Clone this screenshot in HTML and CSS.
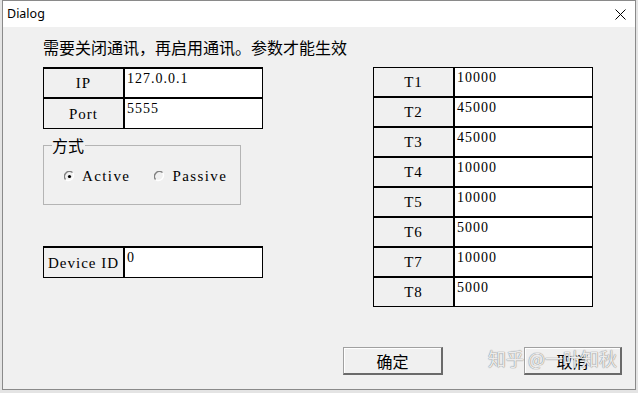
FILE: index.html
```html
<!DOCTYPE html>
<html lang="zh-CN">
<head>
<meta charset="utf-8">
<title>Dialog</title>
<link rel="stylesheet" href="styles.css">
</head>
<body>
<div class="window">
  <div class="titlebar">
    <span class="title">Dialog</span>
    <svg class="close" width="11" height="11" viewBox="0 0 11 11"><path d="M0.5 0.5 L10.5 10.5 M10.5 0.5 L0.5 10.5" stroke="#000" stroke-width="1" fill="none"/></svg>
  </div>
  <div class="client">
    <div class="heading">需要关闭通讯，再启用通讯。参数才能生效</div>
    <div class="columns">
      <div class="col-left">
        <div class="kv kv-two">
          <div class="k">IP</div><div class="v">127.0.0.1</div>
          <div class="k">Port</div><div class="v">5555</div>
        </div>
        <fieldset class="group">
          <legend>方式</legend>
          <div class="radios">
            <label class="radio">
              <svg width="11" height="11" viewBox="0 0 11 11"><path d="M1.5 8.5 A5 5 0 0 1 8.5 1.5" stroke="#808080" stroke-width="1.4" fill="none"/><path d="M8.8 2 A5 5 0 0 1 2 8.8" stroke="#ffffff" stroke-width="1.4" fill="none"/><circle cx="5.5" cy="5.5" r="1.6" fill="#000"/></svg>
              <span>Active</span>
            </label>
            <label class="radio">
              <svg width="11" height="11" viewBox="0 0 11 11"><path d="M1.5 8.5 A5 5 0 0 1 8.5 1.5" stroke="#808080" stroke-width="1.4" fill="none"/><path d="M8.8 2 A5 5 0 0 1 2 8.8" stroke="#ffffff" stroke-width="1.4" fill="none"/></svg>
              <span>Passive</span>
            </label>
          </div>
        </fieldset>
        <div class="kv kv-one">
          <div class="k">Device ID</div><div class="v">0</div>
        </div>
      </div>
      <div class="col-right">
        <div class="kv kv-eight">
          <div class="k">T1</div><div class="v">10000</div>
          <div class="k">T2</div><div class="v">45000</div>
          <div class="k">T3</div><div class="v">45000</div>
          <div class="k">T4</div><div class="v">10000</div>
          <div class="k">T5</div><div class="v">10000</div>
          <div class="k">T6</div><div class="v">5000</div>
          <div class="k">T7</div><div class="v">10000</div>
          <div class="k">T8</div><div class="v">5000</div>
        </div>
      </div>
    </div>
    <div class="footer">
      <button class="btn btn-ok">确定</button>
      <button class="btn btn-cancel">取消</button>
    </div>
    <div class="watermark">知乎 @一叶知秋</div>
  </div>
</div>
</body>
</html>
```
FILE: styles.css
```css
html, body {
  margin: 0;
  padding: 0;
}
body {
  background: #e4e4e4;
  width: 638px;
  height: 393px;
  overflow: hidden;
  font-family: "Noto Sans CJK SC", sans-serif;
}
.window {
  margin-left: 2px;
  width: 632px;
  height: 388px;
  border: 1px solid #8a8a8a;
  background: #f0f0f0;
  display: flex;
  flex-direction: column;
  position: relative;
}
.titlebar {
  height: 26px;
  background: #ffffff;
  display: flex;
  align-items: center;
  justify-content: space-between;
  padding: 0 9px 0 4px;
}
.title {
  font-family: "Noto Sans", sans-serif;
  font-size: 12.5px;
  color: #000;
  line-height: 26px;
}
.close {
  display: block;
}
.client {
  flex: 1;
  padding: 10px 0 0 40px;
  box-sizing: border-box;
}
.heading {
  font-size: 16px;
  line-height: 20px;
  height: 20px;
  color: #000;
  margin-bottom: 10px;
}
.columns {
  display: flex;
  gap: 110px;
  height: 240px;
}
.col-left, .col-right {
  width: 220px;
  display: flex;
  flex-direction: column;
}
.kv {
  display: grid;
  grid-template-columns: 79px 1fr;
  column-gap: 2px;
  row-gap: 2px;
  background: #000;
  border: 1px solid #000;
  border-top-width: 2px;
}
.kv-two {
  grid-template-rows: 28px 29px;
}
.kv-one {
  grid-template-rows: 29px;
  margin-top: 41px;
}
.kv-eight {
  grid-template-rows: repeat(8, 28px);
  border-top-width: 1px;
}
.k {
  background: #f0f0f0;
  font-family: "Liberation Serif", serif;
  font-size: 15px;
  letter-spacing: 1px;
  color: #000;
  display: flex;
  align-items: center;
  justify-content: center;
  padding-top: 1px;
  white-space: nowrap;
}
.v {
  background: #ffffff;
  font-family: "Liberation Serif", serif;
  font-size: 14px;
  letter-spacing: 1px;
  line-height: 16px;
  padding: 2px 2px 0 2px;
  color: #000;
}
.group {
  margin: 8px 0 0 0;
  width: 198px;
  box-sizing: border-box;
  height: 68px;
  border: 1px solid #b4b4b4;
  padding: 15px 8px 0 8px;
  min-width: 0;
}
.group legend {
  font-size: 16px;
  line-height: 16px;
  padding: 0 1px 0 0;
  color: #000;
}
.radios {
  display: flex;
  align-items: center;
  gap: 24px;
  padding-left: 12px;
  height: 16px;
}
.radio {
  display: flex;
  align-items: center;
  gap: 7px;
  font-family: "Liberation Serif", serif;
  font-size: 15px;
  letter-spacing: 1.4px;
  color: #000;
}
.radio svg {
  display: block;
}
.footer {
  display: flex;
  gap: 81px;
  padding-left: 300px;
  margin-top: 40px;
}
.btn {
  height: 28px;
  box-sizing: border-box;
  background: #f0f0f0;
  border-top: 1px solid #a0a0a0;
  border-left: 1px solid #a0a0a0;
  border-right: 2px solid #6a6a6a;
  border-bottom: 2px solid #6a6a6a;
  box-shadow: inset 1px 1px 0 #ffffff;
  font-family: "Noto Sans CJK SC", sans-serif;
  font-size: 16px;
  line-height: 22px;
  color: #000;
  padding: 0;
}
.btn-ok {
  width: 100px;
}
.btn-cancel {
  width: 98px;
}
.watermark {
  position: absolute;
  left: 485px;
  top: 345px;
  font-size: 18px;
  line-height: 24px;
  color: rgba(255, 255, 255, 0.85);
  text-shadow: 0 0 1px #888, 0 0 1px #888;
  pointer-events: none;
  white-space: nowrap;
}
```
